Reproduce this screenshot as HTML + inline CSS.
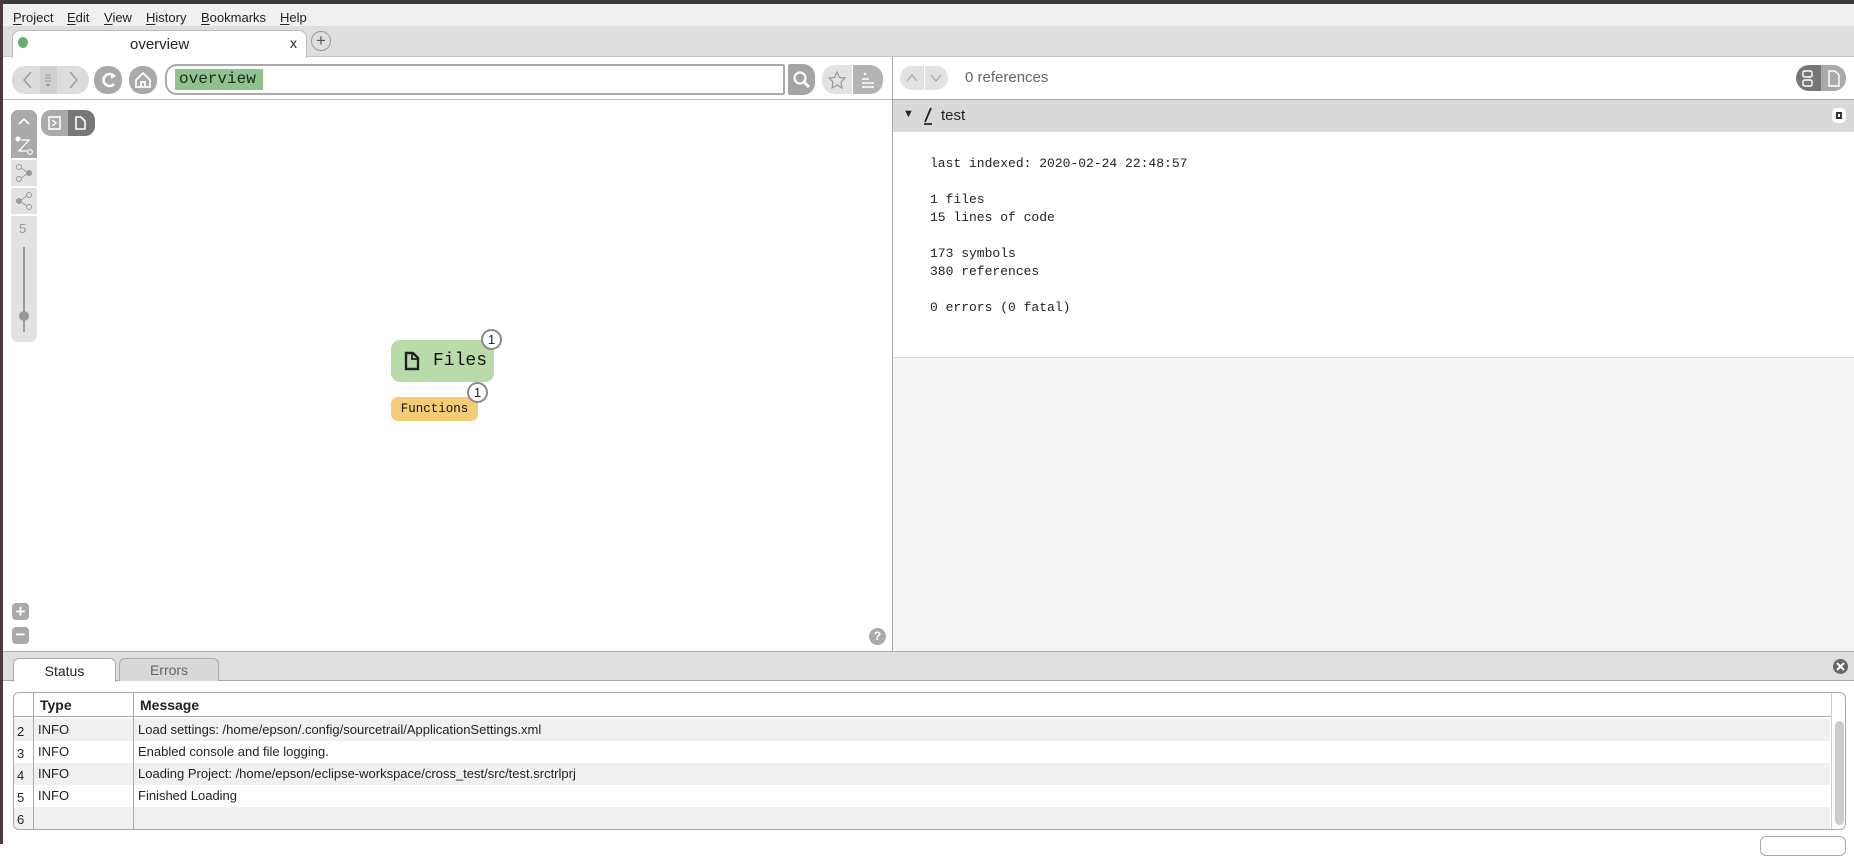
<!DOCTYPE html>
<html><head><meta charset="utf-8"><style>
*{margin:0;padding:0;box-sizing:border-box}
body{width:1854px;height:844px;overflow:hidden;background:#fff;font-family:"Liberation Sans",sans-serif;position:relative;color:#222}
.a{position:absolute}
svg{position:absolute;overflow:visible}
.mono{font-family:"Liberation Mono",monospace}
.menu span{position:absolute;top:6px;font-size:13px}
.menu u{text-decoration-thickness:1px;text-underline-offset:2px}
.btn{position:absolute;border-radius:13px;background:#a9a9a9}
.row{position:absolute;left:14px;width:1816px;height:22px;font-size:13px;line-height:22px}
.row span{position:absolute}
</style></head><body>
<div class="a" style="left:0;top:0;width:1854px;height:4px;background:#3c3b37"></div>
<div class="a" style="left:0;top:0;width:3px;height:844px;background:#4b3a3c"></div>
<div class="a menu" style="left:3px;top:4px;width:1851px;height:22px;background:#f0f0f0">
<span style="left:10px"><u>P</u>roject</span><span style="left:64px"><u>E</u>dit</span><span style="left:101px"><u>V</u>iew</span><span style="left:143px"><u>H</u>istory</span><span style="left:198px"><u>B</u>ookmarks</span><span style="left:277px"><u>H</u>elp</span></div>
<div class="a" style="left:3px;top:26px;width:1851px;height:31px;background:#dedede;border-bottom:1px solid #c8c8c8"></div>
<div class="a" style="left:12px;top:30px;width:295px;height:28px;background:#fff;border:1px solid #bbb;border-bottom:none;border-radius:8px 8px 0 0"></div>
<div class="a" style="left:18px;top:37px;width:10px;height:11px;border-radius:50%;background:#6aab72"></div>
<div class="a" style="left:130px;top:36px;font-size:15px">overview</div>
<div class="a" style="left:290px;top:35px;font-size:14px">x</div>
<div class="a" style="left:311px;top:31px;width:20px;height:20px;border:1px solid #999;border-radius:50%;text-align:center;font-size:17px;line-height:17px;color:#555">+</div>
<!-- toolbar left -->
<div class="a" style="left:3px;top:99px;width:890px;height:1px;background:#bbb"></div>
<div class="btn" style="left:12px;top:66px;width:77px;height:28px;background:#dcdcdc"></div>
<div class="a" style="left:40px;top:66px;width:17px;height:28px;background:#d0d0d0"></div>
<svg style="left:0;top:0" width="1" height="1"><path d="M31 72 L24 80 L31 88" fill="none" stroke="#999" stroke-width="1.5"/><path d="M45 75h6M45 78h6M45 81h6" stroke="#999"/><path d="M46 84 L48 86 L50 84" fill="#999" stroke="#999"/><path d="M70 72 L77 80 L70 88" fill="none" stroke="#999" stroke-width="1.5"/></svg>
<div class="btn" style="left:94px;top:66px;width:28px;height:28px"></div>
<svg style="left:0;top:0" width="1" height="1"><path d="M114 76 A6 6 0 1 0 114 84" fill="none" stroke="#fff" stroke-width="2.5"/><path d="M111 73 L116 76 L111 79z" fill="#fff"/></svg>
<div class="btn" style="left:129px;top:66px;width:28px;height:28px"></div>
<svg style="left:0;top:0" width="1" height="1"><path d="M136 80 L143 73 L150 80 V87 H136z M141 87 V82 H145 V87" fill="none" stroke="#fff" stroke-width="1.8"/></svg>
<div class="a" style="left:165px;top:64px;width:620px;height:31px;border:2px solid #aaa;border-radius:12px 2px 2px 12px;background:#fff"></div>
<div class="a mono" style="left:175px;top:69px;width:88px;height:21px;background:#8fc290;font-size:16px;padding-left:4px;line-height:21px;color:#1a2a1a">overview</div>
<div class="a" style="left:788px;top:64px;width:27px;height:31px;background:#a4a4a4;border-radius:2px 12px 12px 2px"></div>
<svg style="left:0;top:0" width="1" height="1"><circle cx="800" cy="78" r="5.5" fill="none" stroke="#fff" stroke-width="2.2"/><path d="M804 82 L809 87" stroke="#fff" stroke-width="2.8"/></svg>
<div class="btn" style="left:822px;top:65px;width:30px;height:29px;background:#e2e2e2;border-radius:13px 0 0 13px"></div>
<svg style="left:0;top:0" width="1" height="1"><path d="M837 72 L839.5 77.5 L845 78 L841 82 L842 88 L837 85 L832 88 L833 82 L829 78 L834.5 77.5z" fill="none" stroke="#999" stroke-width="1.2"/></svg>
<div class="btn" style="left:853px;top:65px;width:30px;height:29px;background:#b3b3b3;border-radius:0 13px 13px 0"></div>
<svg style="left:0;top:0" width="1" height="1"><path d="M865 72 L866.5 75 L863.5 75z" fill="#fff"/><path d="M862 79h7M862 83h12M862 87h12" stroke="#fff" stroke-width="1.4"/></svg>
<!-- right -->
<div class="a" style="left:892px;top:57px;width:1px;height:594px;background:#aaa"></div>
<div class="btn" style="left:900px;top:66px;width:48px;height:24px;background:#e2e2e2"></div>
<div class="a" style="left:924px;top:66px;width:1px;height:24px;background:#fff"></div>
<svg style="left:0;top:0" width="1" height="1"><path d="M907 81 L912 75 L917 81" fill="none" stroke="#aaa" stroke-width="1.3"/><path d="M931 75 L936 81 L941 75" fill="none" stroke="#aaa" stroke-width="1.3"/></svg>
<div class="a" style="left:965px;top:69px;font-size:15px;color:#666">0 references</div>
<div class="btn" style="left:1796px;top:65px;width:50px;height:26px;background:#777"></div>
<div class="a" style="left:1821px;top:65px;width:25px;height:26px;background:#aaa;border-radius:0 13px 13px 0"></div>
<svg style="left:0;top:0" width="1" height="1"><rect x="1803" y="71" width="9" height="6" rx="1.5" fill="none" stroke="#fff" stroke-width="1.4"/><rect x="1803" y="80" width="9" height="6" rx="1.5" fill="none" stroke="#fff" stroke-width="1.4"/><path d="M1829 71 H1835 L1839 75 V86 H1829z" fill="none" stroke="#fff" stroke-width="1.4"/></svg>
<div class="a" style="left:893px;top:99px;width:961px;height:1px;background:#aaa"></div>
<div class="a" style="left:893px;top:100px;width:961px;height:32px;background:#d9d9d9"></div>
<div class="a" style="left:903px;top:108px;font-size:11px">▼</div>
<svg style="left:0;top:0" width="1" height="1"><path d="M931 108 L925 122 M924 124 H932" stroke="#222" stroke-width="1.8"/></svg>
<div class="a" style="left:941px;top:107px;font-size:15px">test</div>
<div class="a" style="left:1832px;top:108px;width:14px;height:15px;border-radius:5px;background:#fff"></div>
<div class="a" style="left:1836px;top:112px;width:6px;height:7px;border:2px solid #333"></div>
<div class="a mono" style="left:930px;top:155px;font-size:13px;line-height:18px;white-space:pre">last indexed: 2020-02-24 22:48:57

1 files
15 lines of code

173 symbols
380 references

0 errors (0 fatal)</div>
<div class="a" style="left:893px;top:357px;width:961px;height:294px;background:#f4f4f4;border-top:1px solid #ddd"></div>
<!-- graph controls -->
<div class="a" style="left:11px;top:110px;width:26px;height:22px;background:#aaa;border-radius:7px 7px 0 0"></div>
<svg style="left:0;top:0" width="1" height="1"><path d="M19 124 L24 119 L29 124" fill="none" stroke="#fff" stroke-width="1.6"/></svg>
<div class="a" style="left:11px;top:132px;width:26px;height:26px;background:#aaa"></div>
<svg style="left:0;top:0" width="1" height="1"><circle cx="18" cy="139" r="2.5" fill="#fff"/><path d="M21 140 H29 L19 151 H27" fill="none" stroke="#fff" stroke-width="1.3"/><circle cx="30" cy="152" r="2.3" fill="none" stroke="#fff" stroke-width="1.2"/></svg>
<div class="a" style="left:11px;top:160px;width:26px;height:26px;background:#e2e2e2"></div>
<svg style="left:0;top:0" width="1" height="1"><circle cx="19" cy="167" r="2.5" fill="none" stroke="#999"/><circle cx="19" cy="179" r="2.5" fill="none" stroke="#999"/><circle cx="29" cy="173" r="3" fill="#999"/><path d="M21 168 L27 172 M21 178 L27 174" stroke="#999"/></svg>
<div class="a" style="left:11px;top:188px;width:26px;height:26px;background:#e2e2e2"></div>
<svg style="left:0;top:0" width="1" height="1"><circle cx="19" cy="201" r="3" fill="#999"/><circle cx="29" cy="195" r="2.5" fill="none" stroke="#999"/><circle cx="29" cy="207" r="2.5" fill="none" stroke="#999"/><path d="M21 200 L27 196 M21 202 L27 206" stroke="#999"/></svg>
<div class="a" style="left:11px;top:216px;width:26px;height:126px;background:#e2e2e2;border-radius:0 0 7px 7px"></div>
<div class="a" style="left:19px;top:221px;font-size:13px;color:#999">5</div>
<div class="a" style="left:23px;top:247px;width:2px;height:85px;background:#999"></div>
<div class="a" style="left:19px;top:311px;width:10px;height:10px;border-radius:50%;background:#999"></div>
<div class="a" style="left:41px;top:110px;width:27px;height:26px;background:#aaa;border-radius:10px 0 0 10px"></div>
<div class="a" style="left:68px;top:110px;width:27px;height:26px;background:#777;border-radius:0 10px 10px 0"></div>
<svg style="left:0;top:0" width="1" height="1"><rect x="49" y="117" width="11" height="12" fill="none" stroke="#fff" stroke-width="1.6"/><path d="M52 120 L56 123 L52 126" fill="none" stroke="#fff" stroke-width="1.4"/><path d="M76 117 H81 L85 121 V129 H76z" fill="none" stroke="#fff" stroke-width="1.6"/></svg>
<!-- nodes -->
<div class="a mono" style="left:391px;top:340px;width:103px;height:42px;background:#b8dca9;border-radius:9px;font-size:18px;line-height:42px;padding-left:42px;color:#111">Files</div>
<svg style="left:0;top:0" width="1" height="1"><path d="M406 353 H413 L418 358 V369 H406z" fill="none" stroke="#222" stroke-width="2.4"/><path d="M412 353 V359 H418" fill="none" stroke="#222" stroke-width="1.8"/></svg>
<div class="a" style="left:481px;top:329px;width:21px;height:21px;border:2px solid #888;border-radius:50%;background:#fff;font-size:13px;text-align:center;line-height:17px">1</div>
<div class="a mono" style="left:391px;top:397px;width:87px;height:24px;background:#f3cc75;border-radius:7px;font-size:12.5px;line-height:24px;text-align:center;color:#111">Functions</div>
<div class="a" style="left:467px;top:382px;width:21px;height:21px;border:2px solid #888;border-radius:50%;background:#fff;font-size:13px;text-align:center;line-height:17px">1</div>
<div class="a" style="left:12px;top:603px;width:17px;height:17px;border-radius:4px;background:#aaa;color:#fff;text-align:center;font-size:17px;line-height:17px;font-weight:bold">+</div>
<div class="a" style="left:12px;top:627px;width:17px;height:17px;border-radius:4px;background:#aaa;color:#fff;text-align:center;font-size:17px;line-height:15px;font-weight:bold">−</div>
<div class="a" style="left:869px;top:628px;width:17px;height:17px;border-radius:50%;background:#aaa;color:#fff;text-align:center;font-size:12px;line-height:17px;font-weight:bold">?</div>
<!-- bottom -->
<div class="a" style="left:3px;top:651px;width:1851px;height:30px;background:#dfdfdf;border-top:1px solid #aaa;border-bottom:1px solid #aaa"></div>
<div class="a" style="left:13px;top:658px;width:103px;height:24px;background:#fff;border:1px solid #aaa;border-bottom:none;border-radius:6px 6px 0 0;text-align:center;font-size:14px;line-height:24px">Status</div>
<div class="a" style="left:119px;top:658px;width:100px;height:23px;background:#d8d8d8;border:1px solid #aaa;border-bottom:none;border-radius:6px 6px 0 0;text-align:center;font-size:14px;line-height:23px;color:#666">Errors</div>
<div class="a" style="left:1833px;top:659px;width:15px;height:15px;border-radius:50%;background:#666"></div>
<svg style="left:0;top:0" width="1" height="1"><path d="M1837 663 L1844 670 M1844 663 L1837 670" stroke="#fff" stroke-width="2"/></svg>
<div class="a" style="left:13px;top:692px;width:1833px;height:138px;border:1px solid #aaa;border-radius:6px;overflow:hidden">
<div class="a" style="left:0;top:0;width:1818px;height:24px;border-bottom:1px solid #aaa;font-size:14px;font-weight:bold;line-height:24px"><span class="a" style="left:26px">Type</span><span class="a" style="left:126px">Message</span></div>
<div class="row" style="left:0;top:26px;background:#f0f0f0"><span style="left:3px;top:2px">2</span><span style="left:24px">INFO</span><span style="left:124px">Load settings: /home/epson/.config/sourcetrail/ApplicationSettings.xml</span></div>
<div class="row" style="left:0;top:48px"><span style="left:3px;top:2px">3</span><span style="left:24px">INFO</span><span style="left:124px">Enabled console and file logging.</span></div>
<div class="row" style="left:0;top:70px;background:#f0f0f0"><span style="left:3px;top:2px">4</span><span style="left:24px">INFO</span><span style="left:124px">Loading Project: /home/epson/eclipse-workspace/cross_test/src/test.srctrlprj</span></div>
<div class="row" style="left:0;top:92px"><span style="left:3px;top:2px">5</span><span style="left:24px">INFO</span><span style="left:124px">Finished Loading</span></div>
<div class="row" style="left:0;top:114px;background:#f0f0f0"><span style="left:3px;top:2px">6</span></div>
<div class="a" style="left:19px;top:0;width:1px;height:140px;background:#aaa"></div>
<div class="a" style="left:119px;top:0;width:1px;height:140px;background:#aaa"></div>
<div class="a" style="left:1817px;top:0;width:1px;height:140px;background:#ccc"></div>
<div class="a" style="left:1821px;top:28px;width:9px;height:104px;border-radius:5px;background:#ccc"></div>
</div>
<div class="a" style="left:1760px;top:836px;width:86px;height:20px;border:1px solid #aaa;border-radius:6px;background:#fff"></div>
</body></html>
